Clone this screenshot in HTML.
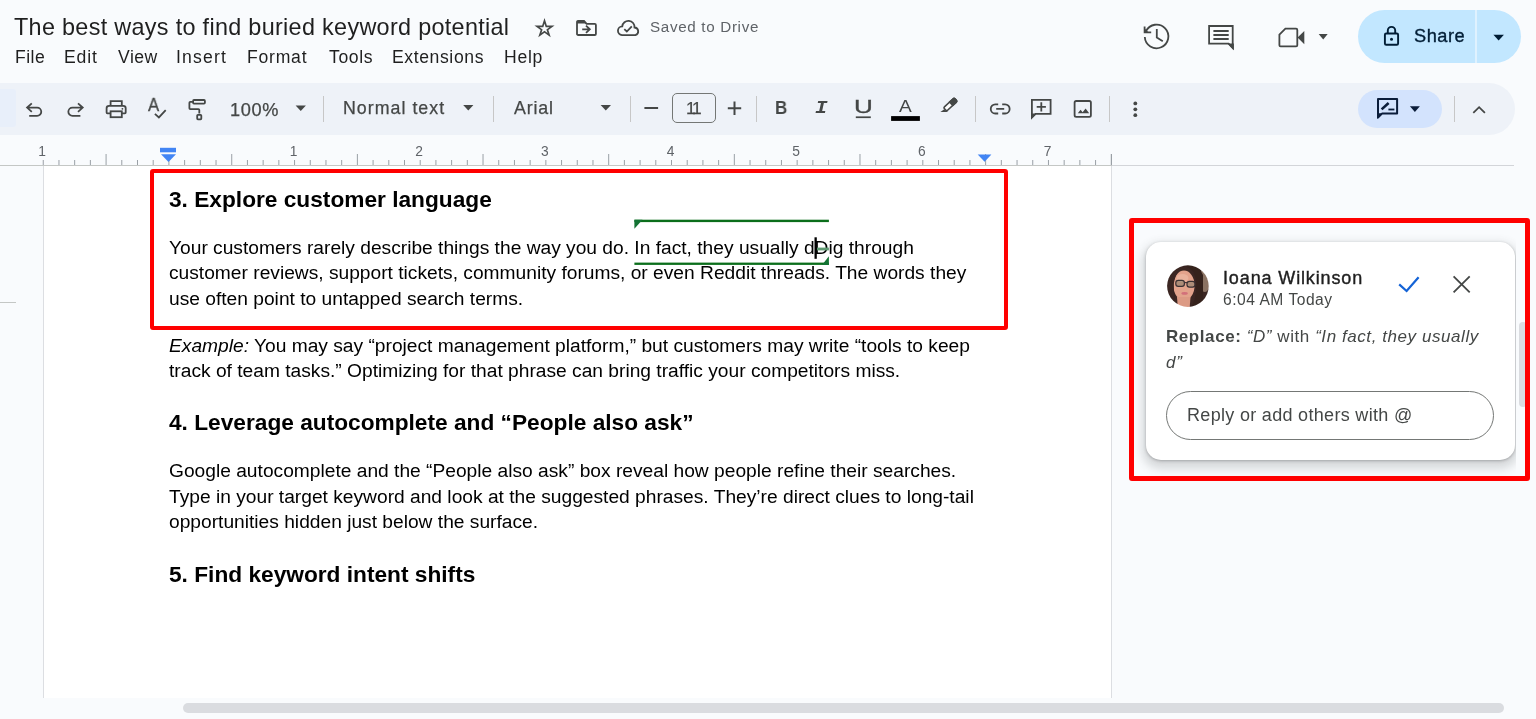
<!DOCTYPE html>
<html><head><meta charset="utf-8">
<style>
html,body{margin:0;padding:0;}
body{width:1536px;height:719px;overflow:hidden;background:#f9fbfd;font-family:"Liberation Sans",sans-serif;position:relative;color:#1f1f1f;}
.abs{position:absolute;white-space:nowrap;}
.p,.h,.t{will-change:transform;}
.t{position:absolute;white-space:nowrap;line-height:20px;}
#toolbar{left:-30px;top:83px;width:1545px;height:52px;border-radius:26px;background:#eef2f8;}
#tbstub{left:0;top:89px;width:16px;height:38px;background:#e8effa;border-radius:0 3px 3px 0;}
.sep{width:1px;height:26px;top:96px;background:#c7c7c7;}
#page{left:43px;top:166px;width:1069px;height:532px;background:#fff;border-left:1px solid #dcdee2;border-right:1px solid #dcdee2;box-sizing:border-box;}
#rulerline{left:0;top:165px;width:1514px;height:1px;background:#d3d5d9;}
#rulerline2{left:0;top:165px;width:1112px;height:1px;background:#c4c7c5;}
.h{font-weight:bold;font-size:22.7px;line-height:26px;color:#000;left:169px;}
.p{font-size:19.2px;line-height:25.5px;color:#000;left:169px;white-space:nowrap;}
#redbox1{left:150.3px;top:168.6px;width:857.3px;height:161.8px;border:4.8px solid #ff0000;box-sizing:border-box;border-radius:3px;}
#redbox2{left:1128.8px;top:218px;width:401px;height:263.2px;border:5px solid #ff0000;box-sizing:border-box;border-radius:3px;}
#card{left:1146px;top:241.5px;width:369px;height:218.5px;background:#fff;border-radius:15px;box-shadow:0 1px 3px rgba(60,64,67,.35),0 5px 10px 4px rgba(60,64,67,.18);}
#sharebtn{left:1358px;top:10.3px;width:162.5px;height:52.3px;border-radius:27px;background:#c2e7ff;}
#sharediv{left:1475px;top:10.3px;width:2px;height:52.3px;background:#dff2ff;}
#mode{left:1358px;top:90px;width:84px;height:38.3px;border-radius:19.2px;background:#d3e3fd;}
#hscroll{left:183px;top:703px;width:1321px;height:10px;border-radius:5px;background:#dadce0;}
#vthumb{left:1519px;top:322px;width:8px;height:85px;border-radius:4px;background:#dadce0;}
#fsbox{left:672px;top:93.3px;width:43.6px;height:30px;border:1px solid #747775;border-radius:5px;box-sizing:border-box;}
#replybox{left:1166.3px;top:390.5px;width:327.5px;height:49px;border:1px solid #747775;border-radius:25px;box-sizing:border-box;}
#avatar{left:1167.2px;top:265.1px;width:42px;height:42px;border-radius:50%;overflow:hidden;background:#3a2320;}
#cmt{left:1167px;font-size:17px;line-height:26.3px;color:#444746;top:0;}
svg{position:absolute;left:0;top:0;will-change:transform;}
.ic{fill:none;stroke:#444746;stroke-width:1.8;stroke-linecap:butt;stroke-linejoin:miter;}
.fl{fill:#444746;stroke:none;}
</style></head><body>

<div class="abs" id="toolbar"></div>
<div class="abs" id="tbstub"></div>
<div class="abs" id="sharebtn"></div>
<div class="abs" id="sharediv"></div>
<div class="abs" id="mode"></div>
<div class="abs sep" style="left:323px"></div>
<div class="abs sep" style="left:493px"></div>
<div class="abs sep" style="left:630px"></div>
<div class="abs sep" style="left:755.5px"></div>
<div class="abs sep" style="left:974.5px"></div>
<div class="abs sep" style="left:1109px"></div>
<div class="abs sep" style="left:1454px"></div>
<div class="abs" id="fsbox"></div>

<div class="abs" id="rulerline"></div>
<div class="abs" id="rulerline2"></div>
<div class="abs" id="page"></div>
<div class="abs" style="left:0;top:302.3px;width:16px;height:1px;background:#c4c7c5"></div>

<div class="abs h" style="top:185.8px">3. Explore customer language</div>
<div class="abs p" style="top:234.8px">Your customers rarely describe things the way you do. <span id="ins">In fact, they usually d</span><span id="del">D</span>ig through</div>
<div class="abs p" style="top:260.3px">customer reviews, support tickets, community forums, or even Reddit threads. The words they</div>
<div class="abs p" style="top:285.8px">use often point to untapped search terms.</div>
<div class="abs p" style="top:332.5px"><i>Example:</i> You may say “project management platform,” but customers may write “tools to keep</div>
<div class="abs p" style="top:358px">track of team tasks.” Optimizing for that phrase can bring traffic your competitors miss.</div>
<div class="abs h" style="top:409px">4. Leverage autocomplete and “People also ask”</div>
<div class="abs p" style="top:458px">Google autocomplete and the “People also ask” box reveal how people refine their searches.</div>
<div class="abs p" style="top:483.5px">Type in your target keyword and look at the suggested phrases. They’re direct clues to long-tail</div>
<div class="abs p" style="top:509px">opportunities hidden just below the surface.</div>
<div class="abs h" style="top:561px">5. Find keyword intent shifts</div>

<div class="abs" id="card"></div>
<div class="abs" id="replybox"></div>
<div class="abs" style="left:1516px;top:166px;width:20px;height:534px;background:#f9fbfd"></div>
<div class="abs" id="vthumb"></div>

<div class="t" id="title" style="left:14.30px;top:16.79px;font-size:23.4px;letter-spacing:0.311px;color:#1f1f1f;">The best ways to find buried keyword potential</div>
<div class="t" id="m1" style="left:14.60px;top:46.90px;font-size:17.6px;letter-spacing:0.468px;color:#1f1f1f;">File</div>
<div class="t" id="m2" style="left:64.00px;top:46.90px;font-size:17.6px;letter-spacing:0.868px;color:#1f1f1f;">Edit</div>
<div class="t" id="m3" style="left:117.80px;top:46.90px;font-size:17.6px;letter-spacing:0.466px;color:#1f1f1f;">View</div>
<div class="t" id="m4" style="left:176.10px;top:46.90px;font-size:17.6px;letter-spacing:1.160px;color:#1f1f1f;">Insert</div>
<div class="t" id="m5" style="left:246.70px;top:46.90px;font-size:17.6px;letter-spacing:0.760px;color:#1f1f1f;">Format</div>
<div class="t" id="m6" style="left:328.50px;top:46.90px;font-size:17.6px;letter-spacing:0.600px;color:#1f1f1f;">Tools</div>
<div class="t" id="m7" style="left:392.30px;top:46.90px;font-size:17.6px;letter-spacing:0.598px;color:#1f1f1f;">Extensions</div>
<div class="t" id="m8" style="left:504.00px;top:46.90px;font-size:17.6px;letter-spacing:0.730px;color:#1f1f1f;">Help</div>
<div class="t" id="saved" style="left:650.10px;top:17.33px;font-size:15.2px;letter-spacing:0.674px;color:#5f6368;">Saved to Drive</div>
<div class="t" id="share" style="left:1414.30px;top:25.59px;font-size:18.2px;letter-spacing:0.550px;color:#001d35;-webkit-text-stroke:0.35px #001d35;">Share</div>
<div class="t" id="zoom" style="left:229.60px;top:99.59px;font-size:18.2px;letter-spacing:0.666px;color:#444746;-webkit-text-stroke:0.25px #444746;">100%</div>
<div class="t" id="style" style="left:342.60px;top:98.13px;font-size:17.8px;letter-spacing:1.020px;color:#444746;-webkit-text-stroke:0.25px #444746;">Normal text</div>
<div class="t" id="font" style="left:513.80px;top:98.13px;font-size:17.8px;letter-spacing:0.850px;color:#444746;-webkit-text-stroke:0.25px #444746;">Arial</div>
<div class="t" id="fs" style="left:685.80px;top:98.27px;font-size:17.4px;letter-spacing:-2.400px;color:#444746;-webkit-text-stroke:0.25px #444746;">11</div>
<div class="t" id="name" style="left:1223.40px;top:268.06px;font-size:18.0px;letter-spacing:0.871px;color:#1f1f1f;-webkit-text-stroke:0.4px #1f1f1f;">Ioana Wilkinson</div>
<div class="t" id="time" style="left:1223.40px;top:290.09px;font-size:15.6px;letter-spacing:0.517px;color:#444746;">6:04 AM Today</div>
<div class="t" id="reply" style="left:1187.40px;top:405.16px;font-size:18.0px;letter-spacing:0.312px;color:#444746;">Reply or add others with @</div>
<div class="t" id="tbB" style="left:775.00px;top:98.39px;font-size:18.2px;letter-spacing:0.000px;color:#444746;font-weight:bold;transform-origin:0 50%;transform:scaleX(0.932);">B</div>
<div class="t" id="tbI" style="left:814.90px;top:98.39px;font-size:18.2px;letter-spacing:0.000px;color:#444746;font-weight:bold;font-style:italic;font-family:Liberation Mono,monospace;transform-origin:0 50%;transform:scaleX(1.150);">I</div>
<div class="t" id="tbU" style="left:854.00px;top:97.20px;font-size:17.9px;letter-spacing:0.000px;color:#444746;-webkit-text-stroke:0.3px #444746;transform-origin:0 50%;transform:scaleX(1.456);">U</div>
<div class="t" id="tbA" style="left:899.00px;top:96.75px;font-size:16.6px;letter-spacing:0.000px;color:#444746;transform-origin:0 50%;transform:scaleX(1.152);">A</div>
<div class="t" id="spA" style="left:148.00px;top:95.26px;font-size:18.3px;letter-spacing:0.000px;color:#444746;-webkit-text-stroke:0.3px #444746;transform-origin:0 50%;transform:scaleX(0.917);">A</div>
<div class="t" id="cmt1" style="left:1166.00px;top:326.61px;font-size:17.0px;letter-spacing:0.568px;color:#444746;"><b>Replace:</b> <i>“D”</i> with <i>“In fact, they usually</i></div>
<div class="t" id="cmt2" style="left:1166.00px;top:352.91px;font-size:17.0px;letter-spacing:0.800px;color:#444746;"><i>d”</i></div>

<svg width="1536" height="719" viewBox="0 0 1536 719">
<!-- ruler -->
<g fill="#9aa0a6"><rect x="42.75" y="160" width="1" height="5"/><rect x="58.46" y="160" width="1" height="5"/><rect x="74.16" y="160" width="1" height="5"/><rect x="89.87" y="160" width="1" height="5"/><rect x="105.58" y="154" width="1" height="11"/><rect x="121.28" y="160" width="1" height="5"/><rect x="136.99" y="160" width="1" height="5"/><rect x="152.69" y="160" width="1" height="5"/><rect x="168.40" y="160" width="1" height="5"/><rect x="184.11" y="160" width="1" height="5"/><rect x="199.81" y="160" width="1" height="5"/><rect x="215.52" y="160" width="1" height="5"/><rect x="231.23" y="154" width="1" height="11"/><rect x="246.93" y="160" width="1" height="5"/><rect x="262.64" y="160" width="1" height="5"/><rect x="278.34" y="160" width="1" height="5"/><rect x="294.05" y="160" width="1" height="5"/><rect x="309.76" y="160" width="1" height="5"/><rect x="325.46" y="160" width="1" height="5"/><rect x="341.17" y="160" width="1" height="5"/><rect x="356.88" y="154" width="1" height="11"/><rect x="372.58" y="160" width="1" height="5"/><rect x="388.29" y="160" width="1" height="5"/><rect x="403.99" y="160" width="1" height="5"/><rect x="419.70" y="160" width="1" height="5"/><rect x="435.41" y="160" width="1" height="5"/><rect x="451.11" y="160" width="1" height="5"/><rect x="466.82" y="160" width="1" height="5"/><rect x="482.52" y="154" width="1" height="11"/><rect x="498.23" y="160" width="1" height="5"/><rect x="513.94" y="160" width="1" height="5"/><rect x="529.64" y="160" width="1" height="5"/><rect x="545.35" y="160" width="1" height="5"/><rect x="561.06" y="160" width="1" height="5"/><rect x="576.76" y="160" width="1" height="5"/><rect x="592.47" y="160" width="1" height="5"/><rect x="608.18" y="154" width="1" height="11"/><rect x="623.88" y="160" width="1" height="5"/><rect x="639.59" y="160" width="1" height="5"/><rect x="655.29" y="160" width="1" height="5"/><rect x="671.00" y="160" width="1" height="5"/><rect x="686.71" y="160" width="1" height="5"/><rect x="702.41" y="160" width="1" height="5"/><rect x="718.12" y="160" width="1" height="5"/><rect x="733.83" y="154" width="1" height="11"/><rect x="749.53" y="160" width="1" height="5"/><rect x="765.24" y="160" width="1" height="5"/><rect x="780.94" y="160" width="1" height="5"/><rect x="796.65" y="160" width="1" height="5"/><rect x="812.36" y="160" width="1" height="5"/><rect x="828.06" y="160" width="1" height="5"/><rect x="843.77" y="160" width="1" height="5"/><rect x="859.48" y="154" width="1" height="11"/><rect x="875.18" y="160" width="1" height="5"/><rect x="890.89" y="160" width="1" height="5"/><rect x="906.59" y="160" width="1" height="5"/><rect x="922.30" y="160" width="1" height="5"/><rect x="938.01" y="160" width="1" height="5"/><rect x="953.71" y="160" width="1" height="5"/><rect x="969.42" y="160" width="1" height="5"/><rect x="985.12" y="154" width="1" height="11"/><rect x="1000.83" y="160" width="1" height="5"/><rect x="1016.54" y="160" width="1" height="5"/><rect x="1032.24" y="160" width="1" height="5"/><rect x="1047.95" y="160" width="1" height="5"/><rect x="1063.66" y="160" width="1" height="5"/><rect x="1079.36" y="160" width="1" height="5"/><rect x="1095.07" y="160" width="1" height="5"/><rect x="1110.78" y="154" width="1" height="11"/></g>
<g font-family="Liberation Sans, sans-serif" font-size="13.8" fill="#5f6368"><text x="42.2" y="156.4" text-anchor="middle">1</text><text x="293.6" y="156.4" text-anchor="middle">1</text><text x="419.2" y="156.4" text-anchor="middle">2</text><text x="544.9" y="156.4" text-anchor="middle">3</text><text x="670.5" y="156.4" text-anchor="middle">4</text><text x="796.1" y="156.4" text-anchor="middle">5</text><text x="921.8" y="156.4" text-anchor="middle">6</text><text x="1047.5" y="156.4" text-anchor="middle">7</text></g>
<rect x="1111" y="154" width="1" height="11" fill="#9aa0a6"/>
<g fill="#4285f4"><rect x="160" y="147.8" width="16" height="4.5"/><path d="M161 154.2H176L168.5 161.9Z"/><path d="M977.7 154.6H991.4L984.6 161.8Z"/></g>

<!-- folder move -->
<path class="ic" stroke-width="1.7" stroke-linejoin="round" d="M577 22.2V33.9a1.1 1.1 0 0 0 1.1 1.1H594.8a1.1 1.1 0 0 0 1.1-1.1V24.9a1.1 1.1 0 0 0-1.1-1.1H586.6L584 20.8H578.1a1.1 1.1 0 0 0-1.1 1.1Z"/>
<path class="fl" d="M577 20.8H584.2L586.9 23.6H577Z"/>
<path class="ic" stroke-width="1.7" d="M582.2 29.3H589.6M586 25.7L589.8 29.3L586 32.9"/>
<!-- cloud done -->
<path class="ic" stroke-width="1.7" d="M622 35.05A4.35 4.35 0 0 1 622.26 26.36A6.05 6.05 0 0 1 634.5 27.5A3.85 3.85 0 0 1 635.4 35.05Z"/>
<path class="ic" stroke-width="1.7" d="M624.3 29.2L626.8 31.5L631.8 26.3"/>
<!-- history -->
<path class="ic" stroke-width="2.3" d="M1144.8 37A11.8 11.8 0 1 0 1146 31.2"/>
<path class="ic" stroke-width="2.2" d="M1144.6 26.4V32.4H1151.2"/>
<path class="fl" d="M1144.6 28.2L1148.6 32.4H1144.6Z"/>
<path class="ic" stroke-width="2.4" d="M1156.8 29V37.5L1162.8 41.2"/>
<!-- comment -->
<path class="ic" stroke-width="2.4" stroke-linejoin="round" d="M1209.1 26H1232.7V48L1228.6 43.6H1209.1Z"/>
<path class="fl" d="M1227.4 43.6H1233.9V50.3Z"/>
<path class="fl" d="M1213.4 30h15.3v2.1h-15.3zM1213.4 34h15.3v2.1h-15.3zM1213.4 37.9h15.3v2.1h-15.3z"/>
<!-- camera -->
<path class="ic" stroke-width="2.6" stroke-linejoin="round" d="M1285.4 28.7H1296.1a1.2 1.2 0 0 1 1.2 1.2V45.2a1.2 1.2 0 0 1-1.2 1.2H1280.6a1.2 1.2 0 0 1-1.2-1.2V34.6Z"/>
<path class="fl" d="M1297.6 37.6L1304.3 31V44.2Z"/>
<path class="fl" d="M1318.7 34.1H1327.7L1323.2 39.4Z"/>
<!-- lock -->
<g fill="none" stroke="#001d35" stroke-width="1.9"><rect x="1384.9" y="33.5" width="13.2" height="11.2" rx="1.3"/><path d="M1387.8 33.5V30.6a3.7 3.7 0 0 1 7.4 0V33.5"/></g>
<circle cx="1391.5" cy="39.3" r="1.5" fill="#001d35"/>
<path fill="#001d35" d="M1493.4 34.7H1503.9L1498.65 40.5Z"/>
<!-- undo -->
<path class="ic" stroke-width="1.8" d="M31.8 103.4L27.1 107.6L31.8 111.8M27.3 107.6H37.1a4.15 4.15 0 0 1 0 8.3H29.2"/>
<!-- redo -->
<path class="ic" stroke-width="1.8" d="M78 103.4L82.7 107.6L78 111.8M82.5 107.6H72.5a4.15 4.15 0 0 0 0 8.3H80.4"/>
<!-- print -->
<g class="ic" stroke-width="1.8" stroke-linejoin="round"><path d="M110.6 105.6V101.1H121.8V105.6"/><path d="M110.4 113.3H107.4a0.8 0.8 0 0 1-.8-.8V108.2a2.4 2.4 0 0 1 2.4-2.4H123.3a2.4 2.4 0 0 1 2.4 2.4V112.5a0.8 0.8 0 0 1-.8.8H122"/><rect x="110.6" y="111.3" width="11.2" height="5.9"/></g>
<circle cx="122.4" cy="108.8" r="0.9" class="fl"/>
<!-- spellcheck -->
<path class="ic" stroke-width="1.8" d="M154.9 113.9L158.9 117.4L165.7 110.2"/>
<!-- paint format -->
<g class="ic" stroke-width="1.8" stroke-linejoin="round"><rect x="193.1" y="100" width="11.8" height="3.6" rx="0.9"/><path d="M193.1 101.8H190.3a0.9 0.9 0 0 0-.9.9V108.2a0.9 0.9 0 0 0 .9.9H198.4a0.9 0.9 0 0 1 .9.9V113.6"/><rect x="197.2" y="114.8" width="4.1" height="4.5" rx="0.7"/></g>
<!-- dropdown arrows toolbar -->
<g class="fl"><path d="M295.6 105.5H305.9L300.75 110.9Z"/><path d="M463.2 105.1H473.4L468.3 110.4Z"/><path d="M600.6 105.1H611L605.8 110.4Z"/></g>
<!-- minus plus -->
<path class="fl" d="M644.4 107.1h13.7v2h-13.7zM727.8 107.3h13.4v2h-13.4zM733.5 101.6h2v13.4h-2z"/>
<!-- underline bar, text color bar -->
<rect x="855.8" y="116.4" width="15" height="1.7" class="fl"/>
<rect x="891.1" y="116.1" width="28.8" height="4.8" fill="#000"/>
<!-- highlighter -->
<g transform="rotate(-43 950.6 104.3)"><rect x="943.1" y="102" width="14.4" height="4.6" rx="1.2" fill="#fff" stroke="#444746" stroke-width="1.6"/><path class="fl" d="M950.6 101.2H956.3a2 2 0 0 1 2 2V105.4a2 2 0 0 1-2 2H950.6Z"/></g>
<path class="fl" d="M940.4 112L944 109.6L948.2 112Z"/>
<!-- link -->
<g class="ic" stroke-width="1.9"><path d="M998.2 104.4H995.3a4.55 4.55 0 0 0 0 9.1H998.2M1002.2 104.4H1005.1a4.55 4.55 0 0 1 0 9.1H1002.2M996.2 108.95H1004.2"/></g>
<!-- add comment -->
<path class="ic" stroke-width="1.9" stroke-linejoin="round" d="M1031.9 99.8H1050.6V113.8H1035.6L1031.9 117.6Z"/>
<path class="fl" d="M1031 113.5H1036.5L1031 119Z"/>
<path class="ic" stroke-width="1.8" d="M1036.7 106.8H1045.9M1041.3 102.2V111.4"/>
<!-- image -->
<rect class="ic" stroke-width="1.9" x="1074.6" y="101" width="16.3" height="15.9" rx="1.6"/>
<path class="fl" d="M1077.8 113.3L1080.6 109.8L1082.6 112.3L1085.6 108.6L1089.2 113.3Z"/>
<!-- more vert -->
<g class="fl"><circle cx="1135.3" cy="103.4" r="1.9"/><circle cx="1135.3" cy="109.3" r="1.9"/><circle cx="1135.3" cy="115.2" r="1.9"/></g>
<!-- suggest mode -->
<path fill="none" stroke="#0b1d3a" stroke-width="2" stroke-linejoin="round" d="M1378 99H1397.1V113.6H1382L1378 117.5Z"/>
<path fill="#0b1d3a" d="M1377 113.3H1382.8L1377 119Z"/>
<path fill="none" stroke="#0b1d3a" stroke-width="2.6" d="M1381.6 109.4L1388.6 103"/>
<path fill="none" stroke="#0b1d3a" stroke-width="1.8" d="M1388.4 109.5H1394.4"/>
<path fill="#0b1d3a" d="M1409.9 106.3H1419.9L1414.9 112Z"/>
<!-- chevron up -->
<path class="ic" stroke-width="1.9" d="M1473.3 112.9L1479.1 107.2L1484.9 112.9"/>
<!-- check, close in card -->
<path fill="none" stroke="#1463d6" stroke-width="2.2" d="M1399.2 284.4L1406.6 291L1418.6 277.3"/>
<path class="ic" stroke-width="2.3" d="M1453.6 276.3L1469.7 292.4M1469.7 276.3L1453.6 292.4"/>
<!-- suggestion brackets -->
<g fill="#0b6e1b"><rect x="634.4" y="219.7" width="194.5" height="2.4"/><rect x="634.4" y="262.6" width="194.5" height="2.3"/></g>
<g fill="#137333"><path d="M634.4 219.7H642.5L634.4 228.8Z"/><path d="M828.9 264.9V256.3L822 264.9Z"/></g>
<rect x="817" y="247.6" width="11.9" height="2.8" fill="#5f9a72"/>
<rect x="814.5" y="237.3" width="2.3" height="21.5" fill="#000"/>
<!-- avatar -->
<defs><clipPath id="avc"><circle cx="1187.9" cy="286.1" r="20.8"/></clipPath><filter id="avb" x="-10%" y="-10%" width="120%" height="120%"><feGaussianBlur stdDeviation="0.7"/></filter></defs>
<g clip-path="url(#avc)"><g filter="url(#avb)">
<rect x="1160" y="258" width="56" height="56" fill="#3a2521"/>
<ellipse cx="1204.8" cy="280" rx="5.6" ry="12" fill="#8b7364"/>
<ellipse cx="1184" cy="285.5" rx="10.6" ry="15" fill="#e3a38c"/>
<ellipse cx="1182.5" cy="278" rx="6" ry="4" fill="#eab39d"/>
<path d="M1177 297H1190.5L1189.5 310H1178Z" fill="#dc9a84"/>
<path d="M1166 262H1190Q1176 267 1173.8 284Q1173.5 300 1177 310H1166Z" fill="#3a2521"/>
<path d="M1184 266Q1195.5 268 1196.5 284Q1197 298 1190 310H1203V275L1196 262Z" fill="#35221f"/>
<g stroke="#3b3033" stroke-width="1.2" fill="#6d735f" fill-opacity="0.45"><rect x="1175.8" y="280.4" width="8.6" height="6" rx="2.4"/><rect x="1187" y="281.4" width="8" height="5.8" rx="2.4"/></g>
<path d="M1184.4 282.6H1187" stroke="#3b3033" stroke-width="1.1"/>
<ellipse cx="1184.6" cy="293.4" rx="3.2" ry="1.3" fill="#d2707a"/>
</g></g>
<!-- star -->
<path class="fl" fill-rule="evenodd" d="M544.50 18.10 L546.88 25.42 L554.58 25.42 L548.35 29.95 L550.73 37.28 L544.50 32.75 L538.27 37.28 L540.65 29.95 L534.42 25.42 L542.12 25.42Z M544.50 23.60 L545.67 27.19 L549.45 27.19 L546.39 29.41 L547.56 33.01 L544.50 30.79 L541.44 33.01 L542.61 29.41 L539.55 27.19 L543.33 27.19Z"/>
</svg>

<div class="abs" id="redbox1"></div>
<div class="abs" id="redbox2"></div>
<div class="abs" id="hscroll"></div>

</body></html>
